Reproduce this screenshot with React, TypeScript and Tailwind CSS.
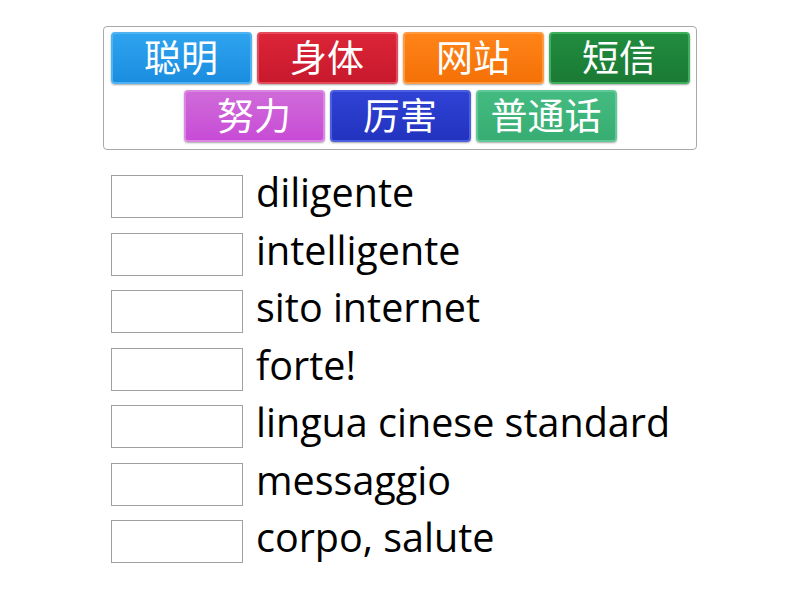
import React from "react";

type Tile = { label: string; cls: string };

const row1: Tile[] = [
  { label: "聪明", cls: "bg-gradient-to-b from-[#2ea3ee] to-[#1b8de0] border-[#4db3f2]" },
  { label: "身体", cls: "bg-gradient-to-b from-[#dc2438] to-[#c8192c] border-[#e54a5a]" },
  { label: "网站", cls: "bg-gradient-to-b from-[#ff8418] to-[#f47106] border-[#ff9a40]" },
  { label: "短信", cls: "bg-gradient-to-b from-[#208c3e] to-[#1b7a35] border-[#3fae5c]" },
];

const row2: Tile[] = [
  { label: "努力", cls: "bg-gradient-to-b from-[#cf6ad9] to-[#c84bd6] border-[#da86e2]" },
  { label: "厉害", cls: "bg-gradient-to-b from-[#2f42d4] to-[#2233bf] border-[#4c5fe0]" },
  { label: "普通话", cls: "bg-gradient-to-b from-[#43bb80] to-[#38ad73] border-[#62c996]" },
];

const words = [
  "diligente",
  "intelligente",
  "sito internet",
  "forte!",
  "lingua cinese standard",
  "messaggio",
  "corpo, salute",
];

function TileButton({ tile }: { tile: Tile }) {
  return (
    <div
      className={`w-[141px] h-[52px] rounded-[4px] border-2 ${tile.cls} shadow-[0_1px_2px_rgba(0,0,0,0.35)] flex items-center justify-center text-white text-[37px] leading-none`}
      style={{ fontFamily: '"Noto Sans CJK SC", sans-serif' }}
    >
      <span className="-mt-[3px]">{tile.label}</span>
    </div>
  );
}

export default function App() {
  return (
    <div className="w-[800px] h-[600px] bg-white relative" style={{ fontFamily: '"Open Sans", sans-serif' }}>
      <div className="pt-[26px] flex justify-center">
        {/* Tile bank */}
        <div className="w-[594px] h-[124px] border border-[#a8a8a8] rounded-[4px] flex flex-col items-center pt-[5px] gap-[6px]">
          <div className="flex gap-[5px]">
            {row1.map((t) => (
              <TileButton key={t.label} tile={t} />
            ))}
          </div>
          <div className="flex gap-[5px]">
            {row2.map((t) => (
              <TileButton key={t.label} tile={t} />
            ))}
          </div>
        </div>
      </div>

      {/* Answer rows */}
      <div className="pl-[111px] pt-[25px] flex flex-col gap-[14.5px]">
        {words.map((w) => (
          <div key={w} className="flex items-center gap-[13px]">
            <div className="w-[132px] h-[43px] border border-[#a0a0a0] bg-white shrink-0" />
            <span className="text-[39.5px] leading-none text-black -mt-[7px]">{w}</span>
          </div>
        ))}
      </div>
    </div>
  );
}
